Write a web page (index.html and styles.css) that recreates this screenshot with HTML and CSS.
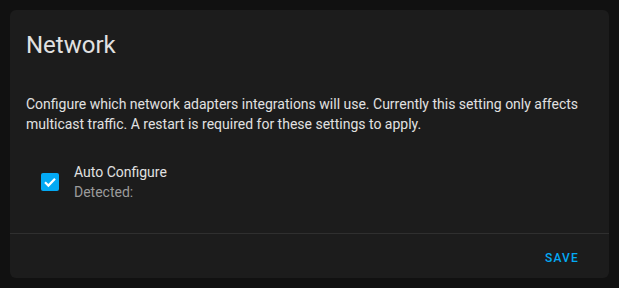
FILE: index.html
```html
<!DOCTYPE html>
<html>
<head>
<meta charset="utf-8">
<link rel="stylesheet" href="styles.css">
</head>
<body>
<div class="card">
  <h1 class="card-header">Network</h1>
  <div class="card-content">
    <p class="description">Configure which network adapters integrations will use. Currently this setting only affects multicast traffic. A restart is required for these settings to apply.</p>
    <div class="option">
      <span class="checkbox">
        <svg viewBox="0 0 18 18" width="18" height="18"><path d="M4 9.3 L7.4 12.6 L14 5.8" fill="none" stroke="#fff" stroke-width="2.2"/></svg>
      </span>
      <div class="option-text">
        <div class="option-label">Auto Configure</div>
        <div class="option-secondary">Detected:</div>
      </div>
    </div>
  </div>
  <div class="card-actions">
    <button class="btn">Save</button>
  </div>
</div>
</body>
</html>
```
FILE: styles.css
```css
html, body {
  margin: 0;
  background: #111111;
}
body {
  padding: 10px;
  font-family: Roboto, "Noto Sans", sans-serif;
  color: #e1e1e1;
}
.card {
  width: 599px;
  height: 268px;
  box-sizing: border-box;
  background: #1c1c1c;
  border-radius: 6px;
  display: flex;
  flex-direction: column;
}
.card-header {
  margin: 0;
  padding: 19px 16px 0;
  font-size: 24px;
  font-weight: 400;
  line-height: 32px;
  color: #e1e1e1;
}
.card-content {
  padding: 0 16px;
  flex: 1;
}
.description {
  margin: 33px 0 0;
  font-size: 14px;
  line-height: 20px;
}
.option {
  display: flex;
  align-items: center;
  margin-top: 28px;
  padding-left: 15px;
}
.checkbox {
  width: 18px;
  height: 18px;
  border-radius: 2px;
  background: #03a9f4;
  display: flex;
  margin-right: 15px;
}
.option-text {
  font-size: 14px;
  line-height: 20px;
}
.option-label {
  color: #e1e1e1;
}
.option-secondary {
  color: #9b9b9b;
}
.card-actions {
  border-top: 1px solid #2f2f2f;
  height: 45px;
  box-sizing: border-box;
  display: flex;
  justify-content: flex-end;
  align-items: center;
  padding: 0 22px 0 16px;
}
.btn {
  background: none;
  border: none;
  color: #03a9f4;
  font-family: Roboto, sans-serif;
  font-size: 12px;
  font-weight: 500;
  letter-spacing: 1.2px;
  text-transform: uppercase;
  padding: 0 8px;
  height: 36px;
  margin-top: 3px;
}
```
